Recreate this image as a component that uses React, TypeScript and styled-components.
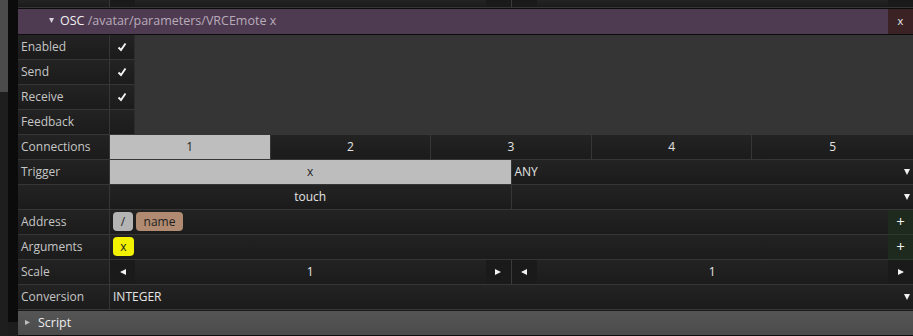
import styled, { createGlobalStyle, css } from 'styled-components';

const GlobalStyle = createGlobalStyle`
  html, body {
    margin: 0;
    padding: 0;
    background: #1c1c1c;
    overflow: hidden;
  }
  * {
    box-sizing: border-box;
  }
`;

const Frame = styled.div`
  display: flex;
  width: 913px;
  height: 336px;
  font-family: "Open Sans", "DejaVu Sans", sans-serif;
  font-size: 12px;
  color: #e4e4e4;
`;

const Gutter = styled.div`
  width: 8px;
  background: linear-gradient(#4b4b4b 0, #4b4b4b 92px, #1e1e1e 92px);
`;

const Rail = styled.div`
  width: 10px;
  background: linear-gradient(#0b0b0b 0, #0b0b0b 322px, #1c1c1c 322px);
`;

const Panel = styled.div`
  flex: 1;
  display: flex;
  flex-direction: column;
  background: #353535;
`;

const darkCell = css`
  background: linear-gradient(#232323, #1b1b1b);
`;

const Row = styled.div<{ $h?: number }>`
  display: grid;
  grid-template-columns: 92px 1fr;
  height: ${(p) => p.$h ?? 25}px;
  overflow: hidden;
`;

const Label = styled.div`
  ${darkCell};
  display: flex;
  align-items: center;
  padding: 0 0 2px 3px;
  color: #c6c6c6;
  border-right: 1px solid #363636;
  border-bottom: 1px solid #363636;
`;

const Value = styled.div`
  display: flex;
  min-width: 0;
`;

const CheckCell = styled.div`
  ${darkCell};
  width: 25px;
  display: flex;
  align-items: center;
  justify-content: center;
  padding-bottom: 1px;
  border-bottom: 1px solid #363636;
  border-right: 1px solid #2c2c2c;
`;

const Split = styled.div`
  flex: 1;
  display: grid;
  grid-template-columns: 1fr 1fr;
`;

const Tabs = styled.div`
  flex: 1;
  display: grid;
  grid-template-columns: repeat(5, 1fr);
`;

const Tab = styled.div<{ $active?: boolean }>`
  display: flex;
  align-items: center;
  justify-content: center;
  padding-bottom: 2px;
  border-right: 1px solid #363636;
  border-bottom: 1px solid #363636;
  ${(p) =>
    p.$active
      ? css`
          background: #bebebe;
          color: #262626;
        `
      : darkCell};
  &:last-child {
    border-right: none;
  }
`;

const Field = styled.div<{ $center?: boolean; $light?: boolean }>`
  display: flex;
  align-items: center;
  justify-content: ${(p) => (p.$center ? 'center' : 'flex-start')};
  padding: 0 0 2px ${(p) => (p.$center ? 0 : 3)}px;
  position: relative;
  border-right: 1px solid #363636;
  border-bottom: 1px solid #363636;
  min-width: 0;
  ${(p) =>
    p.$light
      ? css`
          background: #bdbdbd;
          color: #222;
        `
      : darkCell};
  &:last-child {
    border-right: none;
  }
  flex: 1;
`;

const Caret = styled.span`
  position: absolute;
  right: 3px;
  top: 50%;
  margin-top: -3px;
  display: flex;
`;

const ChipRow = styled.div`
  ${darkCell};
  flex: 1;
  display: flex;
  align-items: center;
  gap: 3px;
  padding: 0 0 1px 3px;
  border-bottom: 1px solid #363636;
`;

const Chip = styled.span<{ $bg: string; $w: number }>`
  display: inline-flex;
  align-items: center;
  justify-content: center;
  width: ${(p) => p.$w}px;
  height: 19px;
  border-radius: 4px;
  background: ${(p) => p.$bg};
  color: #1e1e1e;
  font-size: 12px;
`;

const AddButton = styled.div`
  width: 25px;
  display: flex;
  align-items: center;
  justify-content: center;
  padding-bottom: 2px;
  background: #1d2a1d;
  color: #f2f2f2;
  font-size: 15px;
  border-bottom: 1px solid #2b3a2b;
`;

const Spin = styled.div`
  ${darkCell};
  display: flex;
  border-right: 1px solid #3a3a3a;
  border-bottom: 1px solid #363636;
  &:last-child {
    border-right: none;
  }
`;

const SpinButton = styled.div`
  width: 25px;
  display: flex;
  align-items: center;
  justify-content: center;
  background: #1a1a1a;
`;

const SpinValue = styled.div`
  flex: 1;
  display: flex;
  align-items: center;
  justify-content: center;
  padding-bottom: 2px;
`;

const Bar = styled.div`
  height: 1px;
  background: #0c0c0c;
`;

const Header = styled.div`
  height: 25px;
  display: flex;
  align-items: center;
  background: #4f3b51;
`;

const HeaderTitle = styled.div`
  flex: 1;
  display: flex;
  align-items: center;
  padding: 0 0 2px 31px;
  gap: 6px;
  font-size: 12.5px;
`;

const Kind = styled.span`
  color: #f0f0f0;
`;

const Path = styled.span`
  color: #b7abb9;
`;

const CloseButton = styled.div`
  width: 25px;
  height: 100%;
  display: flex;
  align-items: center;
  justify-content: center;
  padding-bottom: 2px;
  background: #3a2225;
  color: #ececec;
  font-size: 11px;
`;

const Filler = styled.div`
  flex: 1;
`;

const ScriptBar = styled.div`
  height: 25px;
  display: flex;
  align-items: center;
  gap: 8px;
  padding: 0 0 2px 7px;
  background: linear-gradient(#555555, #4b4b4b);
  border-top: 1px solid #1a1a1a;
  color: #ececec;
  font-size: 12.5px;
`;

const Bottom = styled.div`
  height: 1px;
  background: #0c0c0c;
`;

const Tri = ({ dir, size = 6, color = '#f2f2f2' }: { dir: 'l' | 'r' | 'd'; size?: number; color?: string }) => {
  const pts = dir === 'l' ? '6,0 6,6 0,3' : dir === 'r' ? '0,0 0,6 6,3' : '0,0 6,0 3,6';
  return (
    <svg width={size} height={size} viewBox="0 0 6 6">
      <polygon points={pts} fill={color} />
    </svg>
  );
};

const Check = () => (
  <svg width="10" height="10" viewBox="0 0 10 10">
    <path d="M1.5 5.5 L4 8 L8.5 1.5" stroke="#f4f4f4" strokeWidth="1.9" fill="none" />
  </svg>
);

const CheckRow = ({ label, on }: { label: string; on: boolean }) => (
  <Row>
    <Label>{label}</Label>
    <Value>
      <CheckCell>{on && <Check />}</CheckCell>
      <Filler />
    </Value>
  </Row>
);

const SpinBox = ({ value }: { value?: string }) => (
  <Spin>
    <SpinButton>{value && <Tri dir="l" />}</SpinButton>
    <SpinValue>{value}</SpinValue>
    <SpinButton>{value && <Tri dir="r" />}</SpinButton>
  </Spin>
);

export default function App() {
  return (
    <>
      <GlobalStyle />
      <Frame>
        <Gutter />
        <Rail />
        <Panel>
          <Row $h={8}>
            <Label />
            <Split>
              <SpinBox />
              <SpinBox />
            </Split>
          </Row>
          <Bar />
          <Header>
            <HeaderTitle>
              <Tri dir="d" size={5} color="#d8d0da" />
              <span>
                <Kind>OSC</Kind> <Path>/avatar/parameters/VRCEmote x</Path>
              </span>
            </HeaderTitle>
            <CloseButton>x</CloseButton>
          </Header>
          <Bar />
          <CheckRow label="Enabled" on />
          <CheckRow label="Send" on />
          <CheckRow label="Receive" on />
          <CheckRow label="Feedback" on={false} />
          <Row>
            <Label>Connections</Label>
            <Tabs>
              {['1', '2', '3', '4', '5'].map((t, i) => (
                <Tab key={t} $active={i === 0}>
                  {t}
                </Tab>
              ))}
            </Tabs>
          </Row>
          <Row>
            <Label>Trigger</Label>
            <Split>
              <Field $center $light>
                x
              </Field>
              <Field>
                ANY
                <Caret>
                  <Tri dir="d" />
                </Caret>
              </Field>
            </Split>
          </Row>
          <Row>
            <Label />
            <Split>
              <Field $center>touch</Field>
              <Field>
                <Caret>
                  <Tri dir="d" />
                </Caret>
              </Field>
            </Split>
          </Row>
          <Row>
            <Label>Address</Label>
            <Value>
              <ChipRow>
                <Chip $bg="#b4b4b4" $w={20}>
                  /
                </Chip>
                <Chip $bg="#b08b71" $w={47}>
                  name
                </Chip>
              </ChipRow>
              <AddButton>+</AddButton>
            </Value>
          </Row>
          <Row>
            <Label>Arguments</Label>
            <Value>
              <ChipRow>
                <Chip $bg="#f2f200" $w={21}>
                  x
                </Chip>
              </ChipRow>
              <AddButton>+</AddButton>
            </Value>
          </Row>
          <Row>
            <Label>Scale</Label>
            <Split>
              <SpinBox value="1" />
              <SpinBox value="1" />
            </Split>
          </Row>
          <Row>
            <Label>Conversion</Label>
            <Value>
              <Field>
                INTEGER
                <Caret>
                  <Tri dir="d" />
                </Caret>
              </Field>
            </Value>
          </Row>
          <ScriptBar>
            <Tri dir="r" size={5} color="#bdbdbd" />
            Script
          </ScriptBar>
          <Bottom />
        </Panel>
      </Frame>
    </>
  );
}
